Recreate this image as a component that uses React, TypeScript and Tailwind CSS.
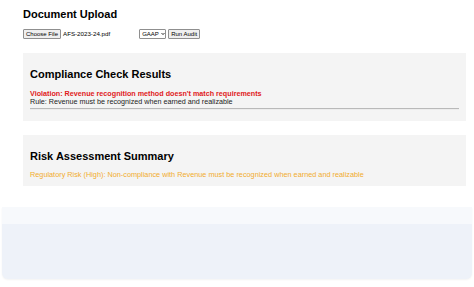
import * as React from 'react'

const App = () => {
  const [standard, setStandard] = React.useState('GAAP')

  return (
    <div className="relative h-[287px] w-[474px] overflow-hidden bg-white font-['Liberation_Sans',Arial,sans-serif] text-black">
      <div className="px-[23px] pt-[7px]">
        <h2 className="text-[11px] font-bold leading-[14px]">Document Upload</h2>

        <div className="mt-[8px] flex h-[10px] items-center text-[6.2px] leading-none">
          <button
            type="button"
            className="h-[10px] rounded-[1px] border border-[#8f8f8f] bg-[#efefef] px-[2px] text-[6px] leading-none text-black"
          >
            Choose File
          </button>
          <span className="ml-[2px] text-black">AFS-2023-24.pdf</span>

          <div className="relative ml-[29px] h-[10px]">
            <select
              value={standard}
              onChange={(e) => setStandard(e.target.value)}
              className="h-[10px] w-[27px] appearance-none rounded-[1px] border border-[#8f8f8f] bg-white pl-[2px] text-[6px] leading-none"
            >
              <option value="GAAP">GAAP</option>
              <option value="IFRS">IFRS</option>
            </select>
            <svg
              className="pointer-events-none absolute right-[1.5px] top-[3px]"
              width="4"
              height="4"
              viewBox="0 0 4 4"
            >
              <path d="M0.5 1 L2 2.6 L3.5 1" fill="none" stroke="#222" strokeWidth="0.9" />
            </svg>
          </div>
          <button
            type="button"
            className="ml-[2px] h-[10px] rounded-[1px] border border-[#8f8f8f] bg-[#efefef] px-[2px] text-[6px] leading-none text-black"
          >
            Run Audit
          </button>
        </div>

        <div className="mt-[14px] w-[443px] bg-[#f4f4f4] px-[7px] pt-[14px] pb-[11px]">
          <h3 className="text-[11px] font-bold leading-[14px]">Compliance Check Results</h3>
          <div className="mt-[9px] pb-[2px] text-[7.2px] leading-[8px]">
            <div className="font-bold text-[#e0201b]">
              Violation: Revenue recognition method doesn't match requirements
            </div>
            <div className="text-[#222]">Rule: Revenue must be recognized when earned and realizable</div>
          </div>
          <div className="border-t border-b border-t-[#b9b9b9] border-b-[#ececec]" />
        </div>

        <div className="mt-[14px] w-[443px] bg-[#f4f4f4] px-[7px] pt-[14px] pb-[7px]">
          <h3 className="text-[11px] font-bold leading-[14px]">Risk Assessment Summary</h3>
          <div className="mt-[8px] text-[7.3px] leading-[8px] text-[#f2ac2e]">
            Regulatory Risk (High): Non-compliance with Revenue must be recognized when earned and realizable
          </div>
        </div>
      </div>

      <div className="mx-[2px] mt-[21px] h-[72px] rounded-b-[6px] bg-[#eef2f9] shadow-[0_1px_2px_rgba(0,0,0,0.05)]">
        <div className="h-[17px] bg-[#f7f9fc]" />
      </div>
    </div>
  )
}

export default App
